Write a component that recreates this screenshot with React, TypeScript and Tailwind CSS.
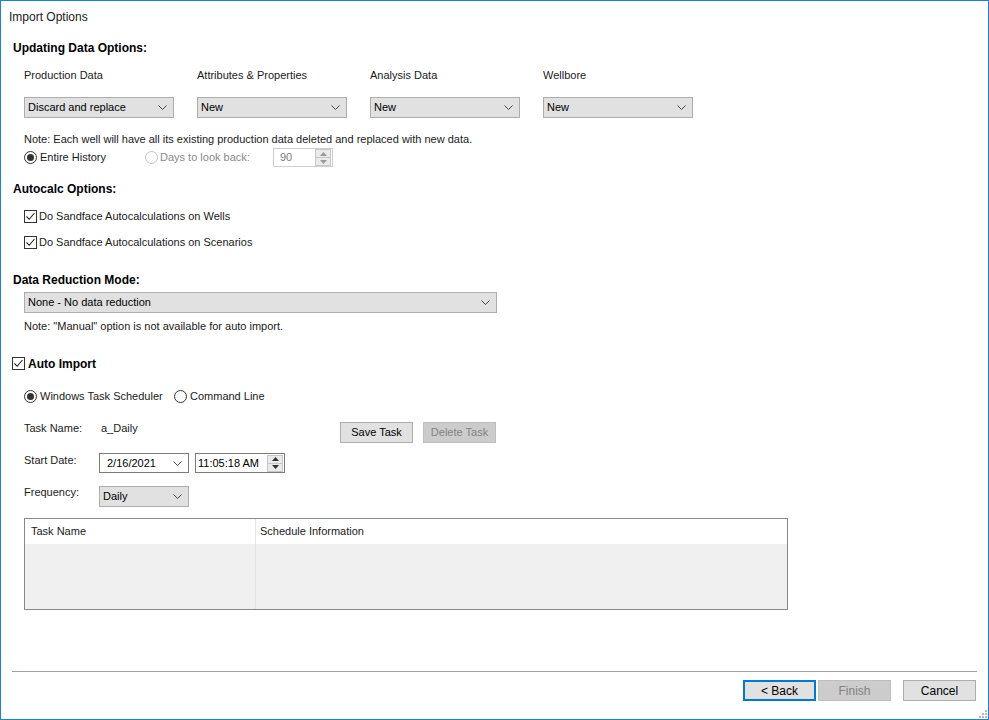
import { type ReactNode } from "react";

const font = "font-['Liberation_Sans',Arial,sans-serif]";

function Chevron() {
  return (
    <svg width="9" height="5" viewBox="0 0 9 5" className="shrink-0">
      <path d="M0.5 0.5 L4.5 4.5 L8.5 0.5" fill="none" stroke="#444" strokeWidth="1" />
    </svg>
  );
}

function Combo({ value, className = "" }: { value: string; className?: string }) {
  return (
    <div
      className={`h-[21px] border border-[#adadad] bg-[#e1e1e1] flex items-center justify-between pl-[3px] pr-[6px] text-black ${className}`}
    >
      <span>{value}</span>
      <Chevron />
    </div>
  );
}

function Check() {
  return (
    <div className="w-[13px] h-[13px] border border-[#333] bg-white flex items-center justify-center shrink-0">
      <svg width="11" height="11" viewBox="0 0 11 11">
        <path d="M1.5 5.5 L4.2 8.3 L9.5 2" fill="none" stroke="#222" strokeWidth="1.1" />
      </svg>
    </div>
  );
}

function Radio({ on = false, disabled = false }: { on?: boolean; disabled?: boolean }) {
  return (
    <div
      className={`w-[13px] h-[13px] rounded-full border bg-white flex items-center justify-center shrink-0 ${
        disabled ? "border-[#c4c4c4]" : "border-[#333]"
      }`}
    >
      {on && <div className="w-[7px] h-[7px] rounded-full bg-[#333]" />}
    </div>
  );
}

function SpinArrows({ dim = false }: { dim?: boolean }) {
  const c = dim ? "#9a9a9a" : "#333";
  return (
    <div className="w-[16px] h-[17px] flex flex-col border border-[#c8c8c8] bg-[#eaeaea] shrink-0">
      <div className="flex-1 flex items-center justify-center border-b border-[#c8c8c8]">
        <svg width="7" height="4" viewBox="0 0 7 4">
          <path d="M0 4 L3.5 0 L7 4 Z" fill={c} />
        </svg>
      </div>
      <div className="flex-1 flex items-center justify-center">
        <svg width="7" height="4" viewBox="0 0 7 4">
          <path d="M0 0 L3.5 4 L7 0 Z" fill={c} />
        </svg>
      </div>
    </div>
  );
}

function Btn({
  children,
  disabled = false,
  focused = false,
  className = "",
}: {
  children: ReactNode;
  disabled?: boolean;
  focused?: boolean;
  className?: string;
}) {
  const look = disabled
    ? "bg-[#cccccc] border-[#bfbfbf] text-[#838383] border"
    : focused
      ? "bg-[#e1e1e1] border-[#0078d7] border-2 text-black"
      : "bg-[#e1e1e1] border-[#adadad] border text-black";
  return (
    <div className={`w-[73px] h-[21px] flex items-center justify-center ${look} ${className}`}>
      {children}
    </div>
  );
}

function Heading({ children }: { children: ReactNode }) {
  return <div className="h-[20px] flex items-center pl-[12px] text-black text-[12px] font-bold">{children}</div>;
}

export default function App() {
  return (
    <div
      className={`${font} text-[11px] text-[#1a1a1a] w-[989px] h-[720px] bg-white border border-[#1883d7] flex flex-col relative overflow-hidden`}
    >
      <div className="h-[31px] flex items-center pl-[8px] text-[12px] text-[#1a1a1a]">Import Options</div>

      {/* updating data */}
      <div className="h-[32px] flex items-center">
        <div className="w-full">
          <Heading>Updating Data Options:</Heading>
        </div>
      </div>
      <div className="h-[22px] flex items-center pl-[23px] gap-[23px]">
        {["Production Data", "Attributes & Properties", "Analysis Data", "Wellbore"].map((t) => (
          <div key={t} className="w-[150px]">
            {t}
          </div>
        ))}
      </div>
      <div className="mt-[11px] flex pl-[23px] gap-[23px]">
        <Combo value="Discard and replace" className="w-[150px]" />
        <Combo value="New" className="w-[150px]" />
        <Combo value="New" className="w-[150px]" />
        <Combo value="New" className="w-[150px]" />
      </div>
      <div className="mt-[13px] h-[17px] flex items-center pl-[23px]">
        Note: Each well will have all its existing production data deleted and replaced with new data.
      </div>
      <div className="h-[19px] flex items-center pl-[23px]">
        <Radio on />
        <span className="ml-[3px] w-[105px]">Entire History</span>
        <Radio disabled />
        <span className="ml-[2px] w-[113px] text-[#8a8a8a]">Days to look back:</span>
        <div className="w-[60px] h-[19px] border border-[#cfcfcf] flex items-center justify-between pl-[6px] pr-[1px] text-[#7a7a7a]">
          <span>90</span>
          <SpinArrows dim />
        </div>
      </div>

      {/* autocalc */}
      <div className="mt-[12px]">
        <Heading>Autocalc Options:</Heading>
      </div>
      <div className="mt-[8px] h-[19px] flex items-center pl-[23px] gap-[2px]">
        <Check />
        <span>Do Sandface Autocalculations on Wells</span>
      </div>
      <div className="mt-[7px] h-[19px] flex items-center pl-[23px] gap-[2px]">
        <Check />
        <span>Do Sandface Autocalculations on Scenarios</span>
      </div>

      {/* data reduction */}
      <div className="mt-[18px]">
        <Heading>Data Reduction Mode:</Heading>
      </div>
      <div className="mt-[2px] pl-[23px]">
        <Combo value="None - No data reduction" className="w-[473px]" />
      </div>
      <div className="mt-[5px] h-[16px] flex items-center pl-[23px]">
        Note: "Manual" option is not available for auto import.
      </div>

      {/* auto import */}
      <div className="mt-[20px] h-[19px] flex items-center pl-[11px] gap-[3px]">
        <Check />
        <span className="text-black text-[12px] font-bold">Auto Import</span>
      </div>
      <div className="mt-[14px] h-[19px] flex items-center pl-[23px]">
        <Radio on />
        <span className="ml-[3px] w-[134px]">Windows Task Scheduler</span>
        <Radio />
        <span className="ml-[3px]">Command Line</span>
      </div>

      <div className="mt-[16px] h-[21px] flex items-center pl-[23px]">
        <span className="w-[77px] -mt-[8px]">Task Name:</span>
        <span className="w-[239px] -mt-[8px]">a_Daily</span>
        <Btn>Save Task</Btn>
        <Btn disabled className="ml-[10px]">
          Delete Task
        </Btn>
      </div>

      <div className="mt-[10px] h-[20px] flex items-center pl-[23px]">
        <span className="w-[75px] -mt-[6px]">Start Date:</span>
        <div className="w-[90px] h-[20px] border border-[#7a7a7a] flex items-center justify-between pl-[7px] pr-[6px] text-black">
          <span>2/16/2021</span>
          <Chevron />
        </div>
        <div className="ml-[6px] w-[90px] h-[20px] border border-[#7a7a7a] flex items-center justify-between pl-[2px] pr-[1px] text-black whitespace-nowrap">
          <span>11:05:18 AM</span>
          <SpinArrows />
        </div>
      </div>

      <div className="mt-[13px] h-[21px] flex items-center pl-[23px]">
        <span className="w-[75px] -mt-[9px]">Frequency:</span>
        <Combo value="Daily" className="w-[90px]" />
      </div>

      {/* scheduled tasks list */}
      <div className="mt-[11px] ml-[23px] w-[764px] h-[92px] border border-[#828790] flex flex-col bg-[#f0f0f0]">
        <div className="h-[25px] bg-white flex">
          <div className="w-[231px] border-r border-[#e5e5e5] flex items-center pl-[6px]">Task Name</div>
          <div className="flex-1 flex items-center pl-[4px]">Schedule Information</div>
        </div>
        <div className="flex-1 flex">
          <div className="w-[231px] border-r border-[#e3e3e3]" />
          <div className="flex-1" />
        </div>
      </div>

      <div className="flex-1" />
      <div className="mx-[11px] h-px bg-[#a0a0a0]" />
      <div className="h-[47px] flex pt-[8px] pr-[12px] justify-end text-[12px]">
        <Btn focused>&lt; Back</Btn>
        <Btn disabled className="ml-[2px]">
          Finish
        </Btn>
        <Btn className="ml-[12px]">Cancel</Btn>
      </div>

      {/* size grip */}
      <svg width="10" height="10" viewBox="0 0 10 10" className="absolute right-[1px] bottom-[1px]">
        {[
          [8, 2],
          [8, 5],
          [5, 5],
          [8, 8],
          [5, 8],
          [2, 8],
        ].map(([x, y]) => (
          <rect key={`${x}-${y}`} x={x} y={y} width="2" height="2" fill="#b8b8b8" />
        ))}
      </svg>
    </div>
  );
}
